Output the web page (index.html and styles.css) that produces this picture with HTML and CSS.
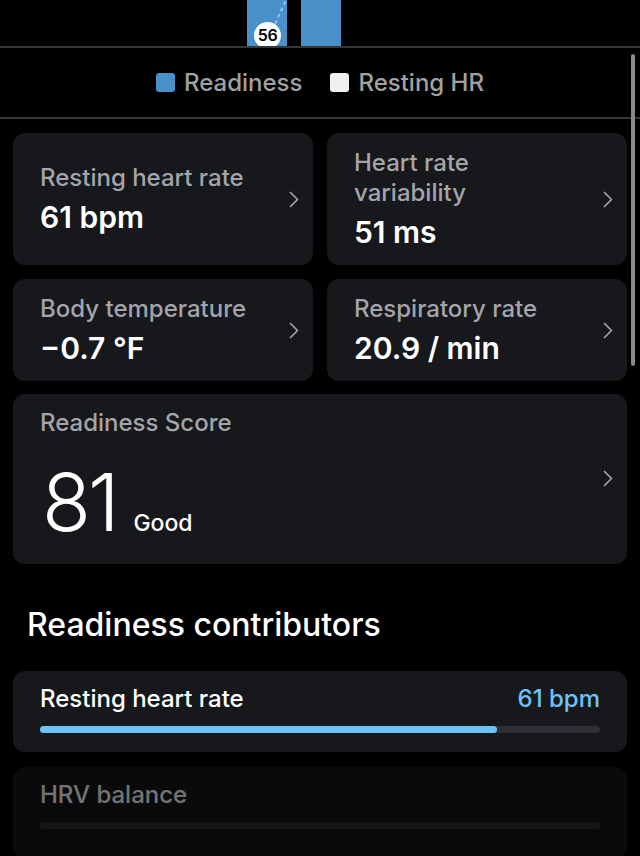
FILE: index.html
```html
<!DOCTYPE html>
<html lang="en">
<head>
    <meta charset="UTF-8">
    <meta name="viewport" content="width=device-width, initial-scale=1.0">
    <title>Readiness</title>
    <link rel="stylesheet" href="styles.css">
</head>
<body>
    <div class="chart">
        <div class="bar">
            <svg class="trend" width="40" height="47" viewBox="0 0 40 47">
                <line x1="28" y1="24" x2="39" y2="0" stroke="#8fc8ef" stroke-width="2" stroke-dasharray="4 3"/>
            </svg>
            <span class="badge">56</span>
        </div>
        <div class="bar"></div>
    </div>

    <div class="legend">
        <span class="key"><i class="swatch blue"></i>Readiness</span>
        <span class="key"><i class="swatch white"></i>Resting HR</span>
    </div>

    <div class="scrollbar"></div>

    <div class="content">
        <div class="grid">
            <div class="card">
                <div class="card-text">
                    <div class="label">Resting heart rate</div>
                    <div class="value">61 bpm</div>
                </div>
                <svg class="chevron" width="10" height="17" viewBox="0 0 10 17"><path d="M1.5 1.5 L8.5 8.5 L1.5 15.5" fill="none" stroke="#a2a4a9" stroke-width="1.7" stroke-linecap="round" stroke-linejoin="round"/></svg>
            </div>
            <div class="card">
                <div class="card-text">
                    <div class="label">Heart rate<br>variability</div>
                    <div class="value">51 ms</div>
                </div>
                <svg class="chevron" width="10" height="17" viewBox="0 0 10 17"><path d="M1.5 1.5 L8.5 8.5 L1.5 15.5" fill="none" stroke="#a2a4a9" stroke-width="1.7" stroke-linecap="round" stroke-linejoin="round"/></svg>
            </div>
            <div class="card">
                <div class="card-text">
                    <div class="label">Body temperature</div>
                    <div class="value">&minus;0.7 °F</div>
                </div>
                <svg class="chevron" width="10" height="17" viewBox="0 0 10 17"><path d="M1.5 1.5 L8.5 8.5 L1.5 15.5" fill="none" stroke="#a2a4a9" stroke-width="1.7" stroke-linecap="round" stroke-linejoin="round"/></svg>
            </div>
            <div class="card">
                <div class="card-text">
                    <div class="label">Respiratory rate</div>
                    <div class="value">20.9 / min</div>
                </div>
                <svg class="chevron" width="10" height="17" viewBox="0 0 10 17"><path d="M1.5 1.5 L8.5 8.5 L1.5 15.5" fill="none" stroke="#a2a4a9" stroke-width="1.7" stroke-linecap="round" stroke-linejoin="round"/></svg>
            </div>
        </div>

        <div class="card score-card">
            <div class="card-text">
                <div class="label">Readiness Score</div>
                <div class="score"><span class="score-num">81</span><span class="score-word">Good</span></div>
            </div>
            <svg class="chevron" width="10" height="17" viewBox="0 0 10 17"><path d="M1.5 1.5 L8.5 8.5 L1.5 15.5" fill="none" stroke="#a2a4a9" stroke-width="1.7" stroke-linecap="round" stroke-linejoin="round"/></svg>
        </div>

        <h2>Readiness contributors</h2>

        <div class="contrib">
            <div class="contrib-head">
                <span>Resting heart rate</span>
                <span class="contrib-val">61 bpm</span>
            </div>
            <div class="track"><div class="fill" style="width: 81.6%"></div></div>
        </div>
        <div class="contrib faded">
            <div class="contrib-head">
                <span>HRV balance</span>
            </div>
            <div class="track"></div>
        </div>
    </div>
</body>
</html>
```

FILE: styles.css
```css
body {
    margin: 0;
    background: #000;
    color: #fff;
    font-family: 'Inter', 'Liberation Sans', sans-serif;
    height: 856px;
    overflow: hidden;
    position: relative;
}
.chart {
    height: 46px;
    border-bottom: 2px solid #363636;
    display: flex;
    gap: 14px;
    padding-left: 247px;
    overflow: hidden;
}
.bar {
    width: 40px;
    background: #4a90cb;
    position: relative;
}
.trend {
    position: absolute;
    left: 0;
    top: 0;
}
.badge {
    position: absolute;
    left: 7px;
    top: 22px;
    width: 27px;
    height: 27px;
    border-radius: 50%;
    background: #fff;
    color: #000;
    font-size: 16px;
    font-weight: 600;
    line-height: 27px;
    text-align: center;
    letter-spacing: -0.5px;
}
.legend {
    height: 69px;
    border-bottom: 2px solid #363636;
    display: flex;
    justify-content: center;
    align-items: center;
    gap: 28px;
    font-size: 24px;
    font-weight: 500;
    color: #a1a1a1;
}
.key {
    display: flex;
    align-items: center;
    gap: 9px;
}
.swatch {
    width: 19px;
    height: 19px;
    border-radius: 3px;
}
.swatch.blue { background: #4a90cb; }
.swatch.white { background: #f0f0f0; }
.scrollbar {
    position: absolute;
    left: 631px;
    top: 54px;
    width: 4px;
    height: 312px;
    border-radius: 2px;
    background: #8a8a8a;
}
.content {
    padding: 14px 13px 0;
}
.grid {
    display: grid;
    grid-template-columns: 1fr 1fr;
    gap: 14px;
}
.card {
    background: #17181c;
    border-radius: 12px;
    padding: 15px 14px 15px 27px;
    display: flex;
    align-items: center;
    justify-content: space-between;
}
.label {
    font-size: 24px;
    line-height: 30px;
    color: #a3a5aa;
    font-weight: 500;
}
.value {
    font-size: 30px;
    line-height: 36px;
    font-weight: 600;
    margin-top: 6px;
}
.score-card {
    margin-top: 13px;
    height: 170px;
    box-sizing: border-box;
    padding-top: 14px;
    align-items: flex-start;
}
.score-card .chevron {
    align-self: center;
}
.score {
    display: flex;
    align-items: baseline;
    gap: 17px;
    margin-top: 24px;
}
.score-num {
    font-size: 80px;
    line-height: 80px;
    font-weight: 300;
    letter-spacing: -3px;
    margin-left: 2px;
}
.score-word {
    font-size: 23px;
    font-weight: 500;
}
h2 {
    font-size: 32px;
    line-height: 38px;
    font-weight: 500;
    margin: 42px 0 27px 14px;
}
.contrib {
    background: #17181c;
    border-radius: 12px;
    padding: 13px 27px 19px;
    margin-bottom: 15px;
}
.contrib-head {
    display: flex;
    justify-content: space-between;
    font-size: 24px;
    line-height: 30px;
    font-weight: 500;
}
.contrib-val {
    color: #6ec3f6;
}
.track {
    margin-top: 12px;
    height: 7px;
    border-radius: 4px;
    background: #2e3034;
}
.fill {
    height: 100%;
    border-radius: 4px;
    background: #6ec3f6;
}
.faded {
    opacity: 0.45;
    height: 59px;
    margin-bottom: 0;
}
```
